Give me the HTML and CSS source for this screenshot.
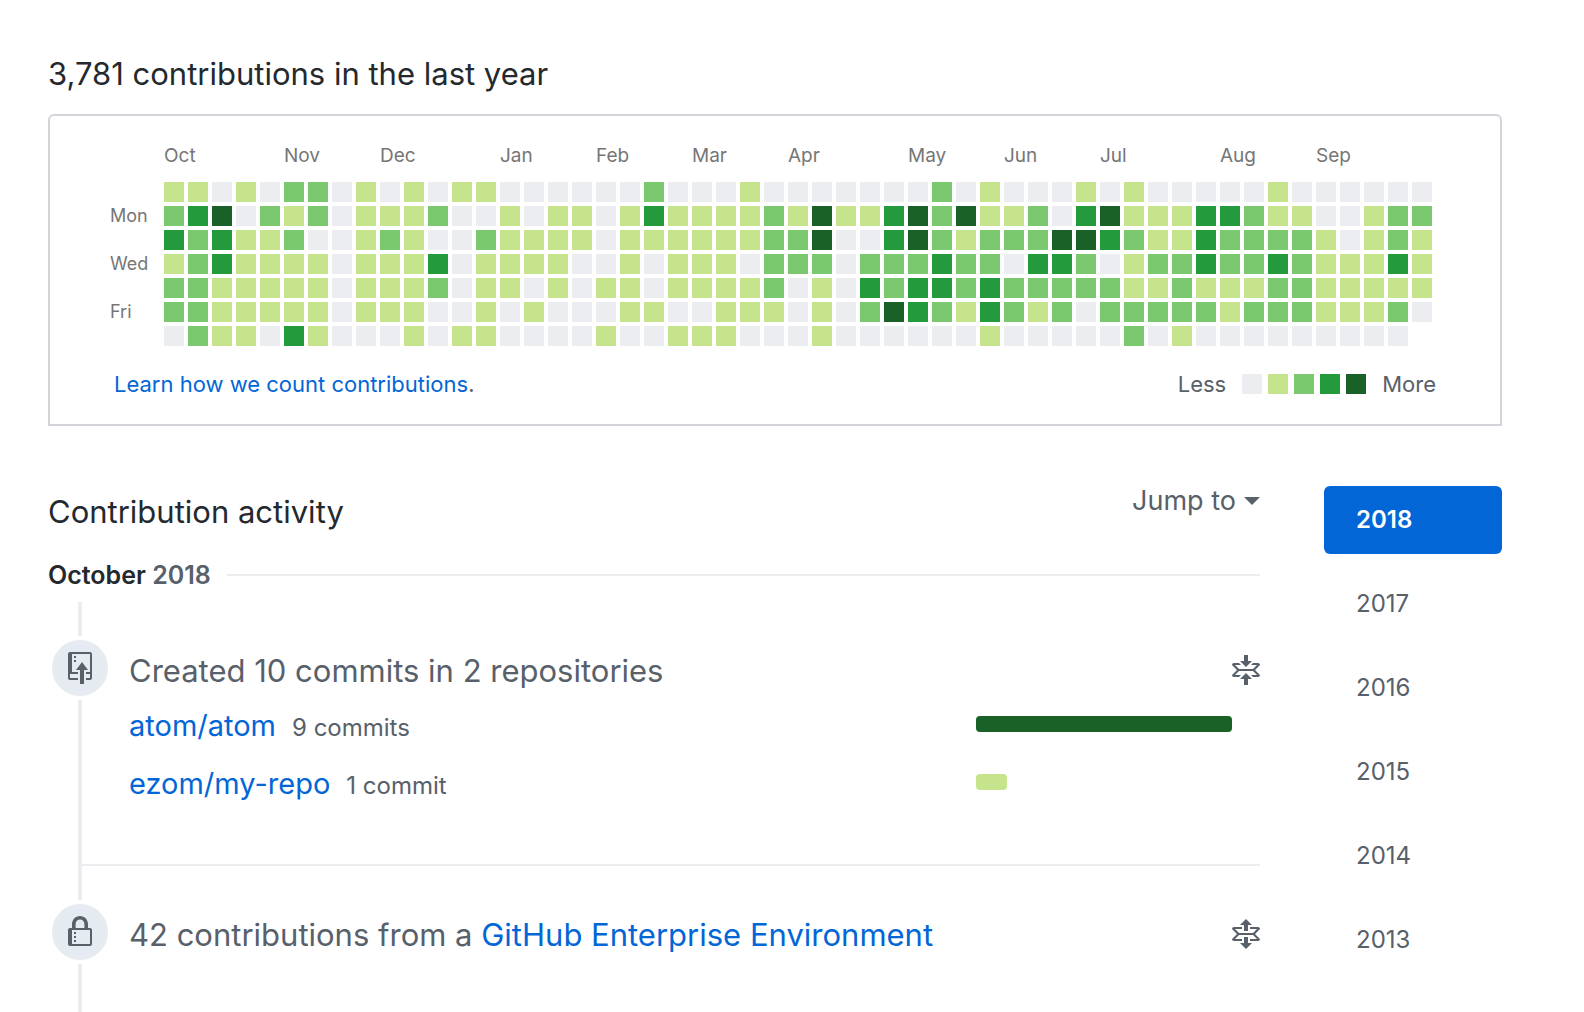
FILE: index.html
```html
<!DOCTYPE html>
<html lang="en">
<head>
    <meta charset="UTF-8">
    <meta name="viewport" content="width=device-width, initial-scale=1.0">
    <title>Contributions</title>
    <link rel="stylesheet" href="styles.css">
</head>
<body>
    <section class="contributions">
        <h2>3,781 contributions in the last year</h2>

        <div class="calendar-box">
            <table class="calendar">
                <thead>
                    <tr>
                        <td class="corner"></td>
                        <th colspan="5">Oct</th>
                        <th colspan="4">Nov</th>
                        <th colspan="5">Dec</th>
                        <th colspan="4">Jan</th>
                        <th colspan="4">Feb</th>
                        <th colspan="4">Mar</th>
                        <th colspan="5">Apr</th>
                        <th colspan="4">May</th>
                        <th colspan="4">Jun</th>
                        <th colspan="5">Jul</th>
                        <th colspan="4">Aug</th>
                        <th colspan="5">Sep</th>
                    </tr>
                </thead>
                <tbody id="days"></tbody>
            </table>

            <div class="calendar-footer">
                <p><a href="#">Learn how we count contributions</a>.</p>
                <div class="legend">
                    <span>Less</span>
                    <ul>
                        <li class="level-0"></li>
                        <li class="level-1"></li>
                        <li class="level-2"></li>
                        <li class="level-3"></li>
                        <li class="level-4"></li>
                    </ul>
                    <span>More</span>
                </div>
            </div>
        </div>
    </section>

    <div class="columns">
        <main class="activity">
            <header class="activity-header">
                <h2>Contribution activity</h2>
                <button type="button" class="jump">Jump to <span class="caret"></span></button>
            </header>

            <h3 class="month"><span>October <span class="year">2018</span></span></h3>

            <article class="item">
                <span class="badge">
                    <svg width="24" height="32" viewBox="0 0 12 16"><path d="M4 3H3V2h1v1zM3 5h1V4H3v1zm4 0L4 9h2v7h2V9h2L7 5zm4-5H1C.45 0 0 .45 0 1v12c0 .55.45 1 1 1h4v-1H1v-2h4v-1H2V1h9.02L11 10H9v1h2v2H9v1h2c.55 0 1-.45 1-1V1c0-.55-.45-1-1-1z"/></svg>
                </span>
                <div class="item-body">
                    <div class="item-title">
                        <h4>Created 10 commits in 2 repositories</h4>
                        <button type="button" class="toggle" aria-label="Collapse">
                            <svg width="28" height="32" viewBox="0 0 14 16"><path d="M7 9l3 3H8v3H6v-3H4l3-3zm3-6H8V0H6v3H4l3 3 3-3zm4 2c0-.55-.45-1-1-1h-2.5l-1 1h3l-2 2h-7l-2-2h3l-1-1H1c-.55 0-1 .45-1 1l2.5 2.5L0 10c0 .55.45 1 1 1h2.5l1-1h-3l2-2h7l2 2h-3l1 1H13c.55 0 1-.45 1-1l-2.5-2.5L14 5z"/></svg>
                        </button>
                    </div>
                    <ul class="repos">
                        <li>
                            <a href="#" class="repo">atom/atom</a>
                            <span class="count">9 commits</span>
                            <span class="bar"><span class="bar-fill level-4" style="width: 100%"></span></span>
                        </li>
                        <li>
                            <a href="#" class="repo">ezom/my-repo</a>
                            <span class="count">1 commit</span>
                            <span class="bar"><span class="bar-fill level-1" style="width: 12%"></span></span>
                        </li>
                    </ul>
                </div>
            </article>

            <article class="item">
                <span class="badge">
                    <svg width="24" height="32" viewBox="0 0 12 16"><path fill-rule="evenodd" d="M4 13H3v-1h1v1zm8-6v7c0 .55-.45 1-1 1H1c-.55 0-1-.45-1-1V7c0-.55.45-1 1-1h1V4c0-2.2 1.8-4 4-4s4 1.8 4 4v2h1c.55 0 1 .45 1 1zM3.8 6h4.41V4c0-1.22-.98-2.2-2.2-2.2-1.22 0-2.2.98-2.2 2.2v2H3.8zM11 7H2v7h9V7zM4 8H3v1h1V8zm0 2H3v1h1v-1z"/></svg>
                </span>
                <div class="item-body">
                    <div class="item-title">
                        <h4>42 contributions from a <a href="#">GitHub Enterprise Environment</a></h4>
                        <button type="button" class="toggle" aria-label="Expand">
                            <svg width="28" height="32" viewBox="0 0 14 16"><path d="M11.5 7.5L14 10c0 .55-.45 1-1 1H9v-1h3.5l-2-2h-7l-2 2H5v1H1c-.55 0-1-.45-1-1l2.5-2.5L0 5c0-.55.45-1 1-1h4v1H1.5l2 2h7l2-2H9V4h4c.55 0 1 .45 1 1l-2.5 2.5zM6 6h2V3h2L7 0 4 3h2v3zm2 3H6v3H4l3 3 3-3H8V9z"/></svg>
                        </button>
                    </div>
                </div>
            </article>
        </main>

        <nav class="years">
            <a href="#" class="selected">2018</a>
            <a href="#">2017</a>
            <a href="#">2016</a>
            <a href="#">2015</a>
            <a href="#">2014</a>
            <a href="#">2013</a>
        </nav>
    </div>

    <script src="script.js"></script>
</body>
</html>
```

FILE: styles.css
```css
* {
    margin: 0;
    padding: 0;
    box-sizing: border-box;
}

body {
    padding: 48px 82px 0 48px;
    background-color: white;
    color: #586069;
    font-family: Inter, "Liberation Sans", sans-serif;
    font-size: 22px;
}

a {
    color: #0366d6;
    text-decoration: none;
}

ul {
    list-style: none;
}

button {
    border: 0;
    background: none;
    color: inherit;
    font: inherit;
    cursor: pointer;
}

svg {
    display: block;
    fill: currentColor;
}

h2 {
    color: #24292e;
    font-size: 31px;
    font-weight: 400;
    line-height: 52px;
}

.level-0 { background-color: #ebedf0; }
.level-1 { background-color: #c6e48b; }
.level-2 { background-color: #7bc96f; }
.level-3 { background-color: #239a3b; }
.level-4 { background-color: #196127; }

/* calendar */

.calendar-box {
    margin-top: 14px;
    padding: 20px 64px 26px 56px;
    border: 2px solid #d1d5da;
    border-radius: 6px 6px 0 0;
}

.calendar {
    border-spacing: 4px;
    table-layout: fixed;
    width: 1330px;
    color: #767676;
}

.calendar .corner {
    width: 50px;
}

.calendar th {
    font-size: 19px;
    font-weight: 400;
    line-height: 32px;
    text-align: left;
}

.calendar thead th {
    height: 38px;
    vertical-align: top;
}

.calendar tbody th {
    font-size: 18px;
    line-height: 20px;
}

.calendar tbody td {
    width: 20px;
    height: 20px;
}

.calendar-footer {
    display: flex;
    justify-content: space-between;
    align-items: center;
    margin-top: 20px;
    padding: 0 0 0 8px;
    line-height: 28px;
}

.legend {
    display: flex;
    align-items: center;
    gap: 16px;
}

.legend ul {
    display: flex;
    gap: 6px;
}

.legend li {
    width: 20px;
    height: 20px;
}

/* activity */

.columns {
    display: flex;
    gap: 64px;
    margin-top: 60px;
}

.activity {
    flex: 1;
}

.activity-header {
    display: flex;
    justify-content: space-between;
    align-items: flex-start;
}

.jump {
    display: flex;
    align-items: center;
    gap: 8px;
    font-size: 27px;
    line-height: 30px;
}

.caret {
    border: 8px solid transparent;
    border-top-color: currentColor;
    border-bottom: 0;
}

.month {
    display: flex;
    align-items: center;
    gap: 16px;
    margin: 18px 0 8px;
    color: #24292e;
    font-size: 25px;
    font-weight: 600;
    line-height: 38px;
}

.month::after {
    content: "";
    flex: 1;
    height: 2px;
    background-color: #eaecef;
}

.year {
    color: #586069;
}

/* timeline down the left, rule along the bottom */
.item {
    display: flex;
    gap: 17px;
    padding-top: 34px;
    background:
        linear-gradient(#eaecef, #eaecef) 30px 0 / 4px 100% no-repeat,
        linear-gradient(#eaecef, #eaecef) 100% 100% / calc(100% - 34px) 2px no-repeat;
}

.item:last-child {
    background: linear-gradient(#eaecef, #eaecef) 30px 0 / 4px 100% no-repeat;
}

.badge {
    display: flex;
    justify-content: center;
    align-items: center;
    align-self: flex-start;
    width: 64px;
    height: 64px;
    border: 4px solid white;
    border-radius: 50%;
    background-color: #e6ebf1;
}

.item-body {
    flex: 1;
    padding: 11px 0 53px;
}

.item-title {
    display: flex;
    justify-content: space-between;
    align-items: center;
}

h4 {
    font-size: 31px;
    font-weight: 400;
    line-height: 48px;
}

.repos {
    margin-top: 2px;
    padding-right: 28px;
}

.repos li {
    display: flex;
    align-items: baseline;
    gap: 16px;
    height: 58px;
    line-height: 58px;
}

.repo {
    font-size: 29px;
}

.count {
    font-size: 24px;
}

.bar {
    align-self: center;
    width: 256px;
    margin-left: auto;
    padding-bottom: 4px;
}

.bar-fill {
    display: block;
    height: 16px;
    border-radius: 4px;
}

/* years */

.years {
    display: flex;
    flex-direction: column;
    gap: 16px;
    width: 178px;
}

.years a {
    padding: 0 32px;
    border-radius: 6px;
    color: #586069;
    font-size: 24px;
    line-height: 68px;
}

.years .selected {
    background-color: #0366d6;
    color: white;
    font-weight: 600;
}
```

FILE: script.js
```javascript
// one string per weekday, one digit (level 0-4) per week
const days = [
    { label: "", levels: "11010220101011000000200010000000201000101000001000000" },
    { label: "Mon", levels: "23402120111200101101311112141134241120341113321100122" },
    { label: "", levels: "32311200121002111101111112240034212224432113222210121" },
    { label: "Wed", levels: "12311110111301111001011102220222322033201223223211131" },
    { label: "", levels: "22111110111201101011011112010323323222221121112211111" },
    { label: "Fri", levels: "22111110111001010001100111010243213212022222122211120" },
    { label: "", levels: "0211031000101100001001110001000000100000201000000000" }
];

const body = document.getElementById("days");

days.forEach(day => {
    const row = body.insertRow();
    const label = document.createElement("th");
    label.innerText = day.label;
    row.appendChild(label);

    for (const level of day.levels) {
        row.insertCell().className = "level-" + level;
    }
});
```
